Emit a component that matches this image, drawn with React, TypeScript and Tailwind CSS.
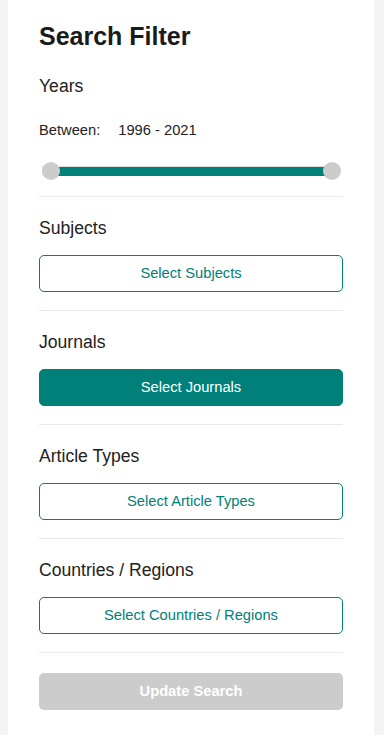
const SECTIONS = [
  { label: "Subjects", button: "Select Subjects", active: false },
  { label: "Journals", button: "Select Journals", active: true },
  { label: "Article Types", button: "Select Article Types", active: false },
  { label: "Countries / Regions", button: "Select Countries / Regions", active: false },
];

function Divider() {
  return <div className="h-px bg-[#e8e8e8]" />;
}

function YearSlider() {
  return (
    <div className="relative h-[18px]">
      <div className="absolute left-[3px] right-[3px] top-[4px] h-[10px] border-t border-[#dddddd] bg-[#eeeeee]" />
      <div className="absolute left-[12px] right-[12px] top-[5px] h-[9px] bg-[#008078]" />
      <span className="absolute left-[3px] top-0 h-[18px] w-[18px] rounded-full bg-[#cccccc]" />
      <span className="absolute right-[2px] top-0 h-[18px] w-[18px] rounded-full bg-[#cccccc]" />
    </div>
  );
}

export default function App() {
  return (
    <div className="min-h-[735px] bg-[#f3f3f3] pl-[8px] pr-[10px] font-['Liberation_Sans',Arial,sans-serif] text-[#222222]">
      <div className="min-h-[735px] bg-white px-[31px] pt-[22px]">
        <h1 className="text-[25px] leading-[28px] font-bold text-[#1a1a1a]">Search Filter</h1>

        <h2 className="mt-[24px] text-[17.6px] leading-[24px]">Years</h2>
        <div className="mt-[22px] flex text-[14.7px] leading-[20px]">
          <span>Between:</span>
          <span className="ml-[18px]">1996 - 2021</span>
        </div>
        <div className="mt-[22px]">
          <YearSlider />
        </div>
        <div className="mt-[16px]">
          <Divider />
        </div>

        {SECTIONS.map((section) => (
          <div key={section.label}>
            <h2 className="mt-[19px] text-[17.6px] leading-[24px]">{section.label}</h2>
            <button
              className={
                section.active
                  ? "mt-[15px] flex h-[37px] w-full items-center justify-center rounded-[5px] border border-[#008078] bg-[#008078] text-[14.7px] text-white"
                  : "mt-[15px] flex h-[37px] w-full items-center justify-center rounded-[5px] border border-[#008078] bg-white text-[14.7px] text-[#008078]"
              }
              type="button"
            >
              {section.button}
            </button>
            <div className="mt-[18px]">
              <Divider />
            </div>
          </div>
        ))}

        <button
          className="mt-[20px] flex h-[37px] w-full items-center justify-center rounded-[5px] bg-[#cccccc] text-[14.7px] font-bold text-white"
          disabled
          type="button"
        >
          Update Search
        </button>
      </div>
    </div>
  );
}
